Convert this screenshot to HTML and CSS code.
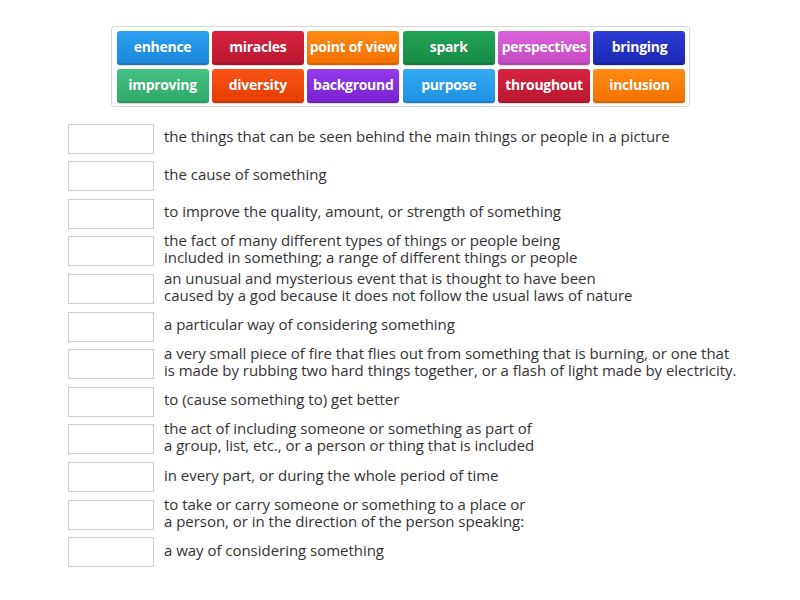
FILE: index.html
```html
<!DOCTYPE html>
<html>
<head>
<meta charset="utf-8">
<link rel="stylesheet" href="styles.css">
</head>
<body>
<div class="page">
  <div class="bank">
    <div class="tile c-blue">enhence</div>
    <div class="tile c-crimson">miracles</div>
    <div class="tile c-orange">point of view</div>
    <div class="tile c-green">spark</div>
    <div class="tile c-pink">perspectives</div>
    <div class="tile c-navy">bringing</div>
    <div class="tile c-mint">improving</div>
    <div class="tile c-red">diversity</div>
    <div class="tile c-purple">background</div>
    <div class="tile c-sky">purpose</div>
    <div class="tile c-crimson">throughout</div>
    <div class="tile c-orange">inclusion</div>
  </div>
  <div class="list">
    <div class="row"><div class="slot"></div><div class="def">the things that can be seen behind the main things or people in a picture</div></div>
    <div class="row"><div class="slot"></div><div class="def">the cause of something</div></div>
    <div class="row"><div class="slot"></div><div class="def">to improve the quality, amount, or strength of something</div></div>
    <div class="row"><div class="slot"></div><div class="def">the fact of many different types of things or people being<br>included in something; a range of different things or people</div></div>
    <div class="row"><div class="slot"></div><div class="def">an unusual and mysterious event that is thought to have been<br>caused by a god because it does not follow the usual laws of nature</div></div>
    <div class="row"><div class="slot"></div><div class="def">a particular way of considering something</div></div>
    <div class="row"><div class="slot"></div><div class="def">a very small piece of fire that flies out from something that is burning, or one that<br>is made by rubbing two hard things together, or a flash of light made by electricity.</div></div>
    <div class="row"><div class="slot"></div><div class="def">to (cause something to) get better</div></div>
    <div class="row"><div class="slot"></div><div class="def">the act of including someone or something as part of<br>a group, list, etc., or a person or thing that is included</div></div>
    <div class="row"><div class="slot"></div><div class="def">in every part, or during the whole period of time</div></div>
    <div class="row"><div class="slot"></div><div class="def">to take or carry someone or something to a place or<br>a person, or in the direction of the person speaking:</div></div>
    <div class="row"><div class="slot"></div><div class="def">a way of considering something</div></div>
  </div>
</div>
</body>
</html>
```

FILE: styles.css
```css
html, body {
  margin: 0;
  padding: 0;
  background: #ffffff;
}
body {
  font-family: "Open Sans", "DejaVu Sans", sans-serif;
  color: #333333;
}
.page {
  width: 800px;
  height: 600px;
  padding-top: 26px;
  box-sizing: border-box;
}
.bank {
  width: 579px;
  margin: 0 auto;
  box-sizing: border-box;
  border: 1px solid #d6d6d6;
  border-radius: 3px;
  padding: 4px 4px 3px 5px;
  display: grid;
  grid-template-columns: repeat(6, 92px);
  grid-auto-rows: 34px;
  column-gap: 3.4px;
  row-gap: 4px;
}
.tile {
  display: flex;
  align-items: center;
  justify-content: center;
  padding-bottom: 3px;
  box-sizing: border-box;
  border-radius: 3px;
  color: #ffffff;
  font-weight: 700;
  font-size: 14px;
  white-space: nowrap;
  letter-spacing: -0.3px;
  box-shadow: inset 0 -2px 0 rgba(0,0,0,0.12), 0 1px 1px rgba(0,0,0,0.15);
  text-shadow: 0 0 1px rgba(0,0,0,0.15);
}
.c-blue { background: linear-gradient(#2ba0f2, #1a86d8); }
.c-crimson { background: linear-gradient(#d6243f, #b9172f); }
.c-orange { background: linear-gradient(#ff8c14, #f27000); }
.c-green { background: linear-gradient(#22a454, #178a43); }
.c-pink { background: linear-gradient(#dc62dc, #c44ac4); }
.c-navy { background: linear-gradient(#2c3cd4, #1a28b2); }
.c-mint { background: linear-gradient(#44c284, #2fa868); }
.c-red { background: linear-gradient(#fa5416, #e23c02); }
.c-purple { background: linear-gradient(#943ced, #7a22d2); }
.c-sky { background: linear-gradient(#33aaf2, #1e90e0); }
.list {
  margin-top: 16.7px;
  padding-left: 68px;
  display: flex;
  flex-direction: column;
  row-gap: 7.6px;
}
.row {
  display: flex;
  align-items: center;
  height: 30px;
  column-gap: 10px;
}
.slot {
  width: 86px;
  height: 30px;
  box-sizing: border-box;
  border: 1px solid #cccccc;
  flex: none;
  background: #ffffff;
}
.def {
  font-size: 15px;
  line-height: 17px;
  white-space: nowrap;
  letter-spacing: -0.03px;
  padding-bottom: 4px;
}
```
